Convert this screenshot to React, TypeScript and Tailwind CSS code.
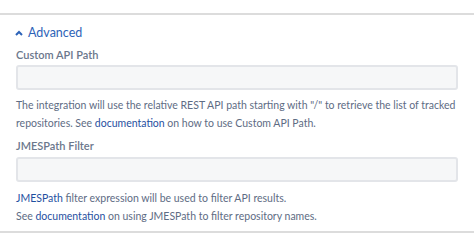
export default function App() {
  return (
    <div className="w-[474px] h-[248px] bg-white pt-[13px] font-['Lato',sans-serif]">
      <div className="border-t-2 border-[#dcdcdc]">
        <div className="px-4 pt-[9px] pb-[6px]">
          {/* Advanced toggle */}
          <button className="flex items-center gap-[5px] text-[12.5px] leading-[18px] text-[#2d63b8]">
            <svg width="8" height="6" viewBox="0 0 8 6" className="-ml-[1px]">
              <path d="M1 5 L4 2 L7 5" fill="none" stroke="#2d63b8" strokeWidth="2" />
            </svg>
            Advanced
          </button>

          {/* Custom API Path */}
          <label className="block mt-[5px] text-[11px] font-semibold leading-[16px] text-[#6b778c]">Custom API Path</label>
          <input className="block mt-[2px] w-[442px] h-[25px] rounded-[3px] border-2 border-[#e3e5e9] bg-[#f6f7f8]" />
          <p className="mt-[6px] whitespace-nowrap text-[10.5px] leading-[18px] text-[#5e6c84]">
            The integration will use the relative REST API path starting with "/" to retrieve the list of tracked
            <br />
            repositories. See <span className="text-[#1f4fa0]">documentation</span> on how to use Custom API Path.
          </p>

          {/* JMESPath Filter */}
          <label className="block mt-[6px] text-[11px] font-semibold leading-[16px] text-[#6b778c]">JMESPath Filter</label>
          <input className="block mt-[3px] w-[442px] h-[25px] rounded-[3px] border-2 border-[#e3e5e9] bg-[#f6f7f8]" />
          <p className="mt-[7px] whitespace-nowrap text-[10.5px] leading-[18px] text-[#5e6c84]">
            <span className="text-[#1f4fa0]">JMESPath</span> filter expression will be used to filter API results.
            <br />
            See <span className="text-[#1f4fa0]">documentation</span> on using JMESPath to filter repository names.
          </p>
        </div>
      </div>
      <div className="border-t-2 border-[#dcdcdc]" />
    </div>
  );
}
